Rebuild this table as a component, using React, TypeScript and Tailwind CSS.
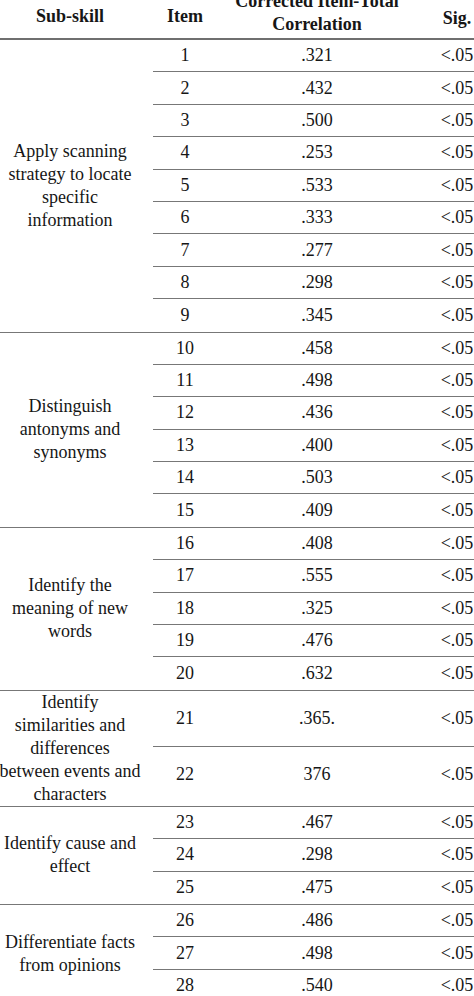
import React from 'react';

type Row = { item: string; r: string; tall?: boolean };
type Group = { skill: string[]; rows: Row[] };

const GROUPS: Group[] = [
    {
        skill: ['Apply scanning', 'strategy to locate', 'specific', 'information'],
        rows: [
            { item: '1', r: '.321' },
            { item: '2', r: '.432' },
            { item: '3', r: '.500' },
            { item: '4', r: '.253' },
            { item: '5', r: '.533' },
            { item: '6', r: '.333' },
            { item: '7', r: '.277' },
            { item: '8', r: '.298' },
            { item: '9', r: '.345' },
        ],
    },
    {
        skill: ['Distinguish', 'antonyms and', 'synonyms'],
        rows: [
            { item: '10', r: '.458' },
            { item: '11', r: '.498' },
            { item: '12', r: '.436' },
            { item: '13', r: '.400' },
            { item: '14', r: '.503' },
            { item: '15', r: '.409' },
        ],
    },
    {
        skill: ['Identify the', 'meaning of new', 'words'],
        rows: [
            { item: '16', r: '.408' },
            { item: '17', r: '.555' },
            { item: '18', r: '.325' },
            { item: '19', r: '.476' },
            { item: '20', r: '.632' },
        ],
    },
    {
        skill: ['Identify', 'similarities and', 'differences', 'between events and', 'characters'],
        rows: [
            { item: '21', r: '.365.', tall: true },
            { item: '22', r: '376', tall: true },
        ],
    },
    {
        skill: ['Identify cause and', 'effect'],
        rows: [
            { item: '23', r: '.467' },
            { item: '24', r: '.298' },
            { item: '25', r: '.475' },
        ],
    },
    {
        skill: ['Differentiate facts', 'from opinions'],
        rows: [
            { item: '26', r: '.486' },
            { item: '27', r: '.498' },
            { item: '28', r: '.540' },
        ],
    },
];

export default function App() {
    return (
        <div className="w-[474px] h-[996px] overflow-hidden bg-white text-[#161616] text-[18px] leading-[23px] font-['Liberation_Serif']">
            <div className="w-[497px]">
                {/* Header */}
                <div className="flex h-[40px] border-b-2 border-[#6f6f6f] font-bold">
                    <div className="w-[153px] pr-[13px] pb-[6px] flex items-center justify-center">Sub-skill</div>
                    <div className="w-[64px] pb-[6px] flex items-center justify-center">Item</div>
                    <div className="w-[200px] pb-[12px] flex items-center justify-center text-center whitespace-nowrap">
                        Corrected Item-Total
                        <br />
                        Correlation
                    </div>
                    <div className="w-[80px] pb-[2px] flex items-center justify-center">Sig.</div>
                </div>

                {GROUPS.map((g, gi) => (
                    <div key={gi} className="flex border-b border-[#777]">
                        <div className="w-[153px] shrink-0 pr-[13px] flex flex-col items-center justify-center text-center whitespace-nowrap">
                            {g.skill.map((line, li) => (
                                <span key={li}>{line}</span>
                            ))}
                        </div>
                        <div className="flex flex-col">
                            {g.rows.map((row, ri) => (
                                <div
                                    key={row.item}
                                    className={`flex items-center ${row.tall ? 'h-[56px]' : 'h-[32.4px]'} ${
                                        ri < g.rows.length - 1 ? 'border-b border-[#777]' : ''
                                    }`}
                                >
                                    <div className="w-[64px] text-center">{row.item}</div>
                                    <div className="w-[200px] text-center">{row.r}</div>
                                    <div className="w-[80px] text-center">&lt;.05</div>
                                </div>
                            ))}
                        </div>
                    </div>
                ))}
            </div>
        </div>
    );
}
